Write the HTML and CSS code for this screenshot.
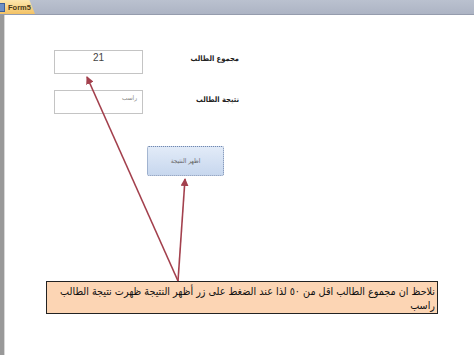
FILE: index.html
```html
<!DOCTYPE html>
<html lang="ar">
<head>
<meta charset="utf-8">
<link rel="stylesheet" href="styles.css">
</head>
<body>
<div class="page">
  <div class="titlebar">
    <div class="tab">
      <span class="tab-icon"></span>
      <span class="tab-text">Form5</span>
    </div>
  </div>
  <div class="frame">
    <div class="leftbar"></div>
    <div class="content">
      <div class="row row1">
        <div class="field field-num">21</div>
        <div class="label" dir="rtl">مجموع الطالب</div>
      </div>
      <div class="row row2">
        <div class="field field-res" dir="rtl">راسب</div>
        <div class="label" dir="rtl">نتيجة الطالب</div>
      </div>
      <div class="btn" dir="rtl">اظهر النتيجة</div>
      <div class="callout" dir="rtl">نلاحظ ان مجموع الطالب اقل من ٥٠ لذا عند الضغط على زر أظهر النتيجة ظهرت نتيجة الطالب<br>راسب</div>
    </div>
  </div>
  <svg class="arrows" width="474" height="355" viewBox="0 0 474 355">
    <defs>
      <marker id="ah" markerWidth="8" markerHeight="8" refX="7" refY="4" orient="auto" markerUnits="userSpaceOnUse">
        <path d="M0,0 L8,4 L0,8 Z" fill="#a3404d"/>
      </marker>
    </defs>
    <line x1="178" y1="281" x2="87" y2="77" stroke="#a3404d" stroke-width="1.6" marker-end="url(#ah)"/>
    <line x1="178" y1="281" x2="185" y2="179" stroke="#a3404d" stroke-width="1.6" marker-end="url(#ah)"/>
  </svg>
</div>
</body>
</html>
```
FILE: styles.css
```css
html, body {
  margin: 0;
  padding: 0;
  background: #ffffff;
}
.page {
  position: relative;
  width: 474px;
  height: 355px;
  overflow: hidden;
  font-family: "DejaVu Sans Condensed", "DejaVu Sans", sans-serif;
}
.titlebar {
  height: 14px;
  background: linear-gradient(#bac1cf, #adb4c4);
  border-bottom: 1px solid #959cad;
  display: flex;
}
.tab {
  width: 31px;
  height: 14px;
  display: flex;
  align-items: center;
  background: linear-gradient(#fde7ae, #f3c265);
  clip-path: polygon(0 0, 84% 0, 100% 100%, 0 100%);
  padding-right: 4px;
}
.tab-icon {
  width: 4px;
  height: 7px;
  background: #6e8fc4;
  border: 1px solid #3d5f99;
  border-left: none;
  margin-right: 3px;
}
.tab-text {
  font-family: "Liberation Sans", sans-serif;
  font-size: 7.5px;
  font-weight: bold;
  color: #4a3a1a;
}
.frame {
  display: flex;
  height: 340px;
}
.leftbar {
  width: 4px;
  background: #999999;
  border-right: 1px solid #d8d8d8;
}
.content {
  flex: 1;
  padding-left: 49px;
  padding-top: 35px;
}
.row {
  display: flex;
  justify-content: space-between;
  align-items: flex-start;
  width: 185px;
}
.row2 {
  margin-top: 16px;
}
.field {
  width: 87px;
  height: 22px;
  border: 1px solid #c4c4c4;
  background: #ffffff;
}
.field-num {
  text-align: center;
  font-family: "Liberation Sans", sans-serif;
  font-size: 10px;
  color: #444444;
  line-height: 12px;
  padding-top: 1px;
  height: 21px;
}
.field-res {
  text-align: right;
  font-size: 6.5px;
  color: #888888;
  padding-right: 5px;
  padding-top: 3px;
  width: 82px;
  height: 19px;
}
.label {
  font-size: 7.5px;
  font-weight: bold;
  color: #222222;
  margin-top: 4px;
}
.row2 .label {
  margin-top: 5px;
}
.btn {
  width: 75px;
  height: 28px;
  margin-left: 93px;
  margin-top: 32px;
  border: 1px dotted #7187ad;
  border-radius: 2px;
  background: linear-gradient(#e2ebf8, #c7d7ee);
  display: flex;
  align-items: center;
  justify-content: center;
  font-size: 6.5px;
  color: #666666;
}
.callout {
  width: 386px;
  height: 28px;
  margin-left: -8px;
  margin-top: 105px;
  border: 1px solid #222222;
  background: #fcd5b4;
  font-size: 10.7px;
  line-height: 14px;
  color: #111111;
  padding: 3px 2px 0 2px;
  text-align: right;
  white-space: nowrap;
  overflow: hidden;
}
.arrows {
  position: absolute;
  left: 0;
  top: 0;
  pointer-events: none;
}
```
